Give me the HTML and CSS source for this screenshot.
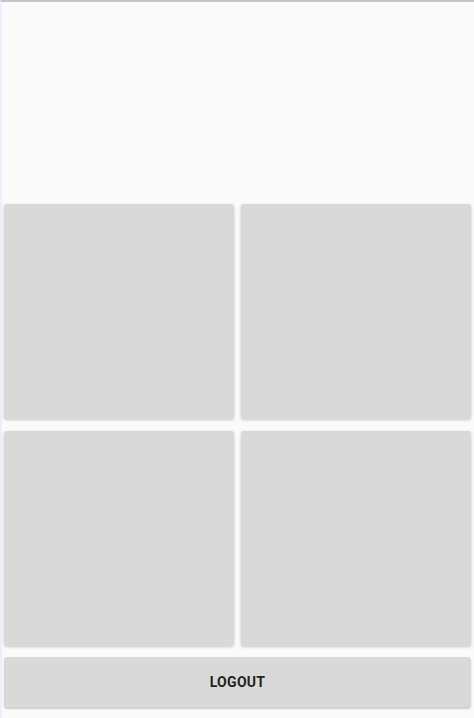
FILE: index.html
```html
<!DOCTYPE html>
<html>
<head>
<meta charset="utf-8">
<link rel="stylesheet" href="styles.css">
</head>
<body>
<div class="page">
  <div class="hero"></div>
  <div class="grid">
    <div class="card"></div>
    <div class="card"></div>
    <div class="card"></div>
    <div class="card"></div>
  </div>
  <button class="logout">LOGOUT</button>
</div>
</body>
</html>
```
FILE: styles.css
```css
html, body {
  margin: 0;
  padding: 0;
  background: #fafafa;
  font-family: Roboto, "Liberation Sans", sans-serif;
}
.page {
  width: 474px;
  height: 718px;
  box-sizing: border-box;
  border-top: 2px solid #c4c4d0;
  border-left: 2px solid #e6f1fb;
  display: flex;
  flex-direction: column;
  padding: 0 3px 0 2px;
}
.hero {
  height: 202px;
  flex: none;
}
.grid {
  display: grid;
  grid-template-columns: 230px 230px;
  grid-template-rows: 215px 215px;
  column-gap: 7px;
  row-gap: 12px;
}
.card {
  background: #d9d9d9;
  border-radius: 3px;
  box-shadow: 0 1px 3px rgba(0,0,0,0.2);
}
.logout {
  margin-top: 11px;
  height: 50px;
  width: 467px;
  border: none;
  border-radius: 3px;
  background: #d9d9d9;
  box-shadow: 0 2px 2px rgba(0,0,0,0.18);
  font-family: Roboto, "Liberation Sans", sans-serif;
  font-weight: 700;
  font-size: 14px;
  letter-spacing: 0.3px;
  color: #222;
  padding: 0;
}
```
